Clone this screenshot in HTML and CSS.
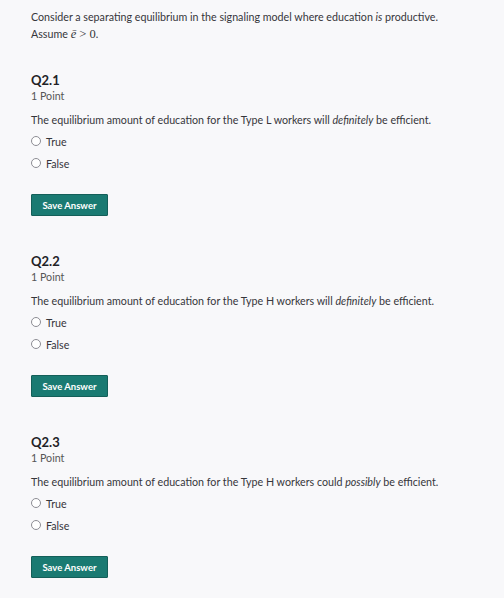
FILE: index.html
```html
<!DOCTYPE html>
<html>
<head>
<meta charset="utf-8">
<link rel="stylesheet" href="styles.css">
</head>
<body>
<div class="page">
  <div class="intro">
    <p>Consider a separating equilibrium in the signaling model where education <em>is</em> productive.</p>
    <p>Assume <span class="math"><span class="ebar">ē</span> &gt; 0</span>.</p>
  </div>

  <section class="q">
    <h2 class="qtitle">Q2.1</h2>
    <div class="points">1 Point</div>
    <p class="prompt">The equilibrium amount of education for the Type L workers will <em>definitely</em> be efficient.</p>
    <label class="opt"><span class="radio"></span>True</label>
    <label class="opt"><span class="radio"></span>False</label>
    <button class="save">Save Answer</button>
  </section>

  <section class="q">
    <h2 class="qtitle">Q2.2</h2>
    <div class="points">1 Point</div>
    <p class="prompt">The equilibrium amount of education for the Type H workers will <em>definitely</em> be efficient.</p>
    <label class="opt"><span class="radio"></span>True</label>
    <label class="opt"><span class="radio"></span>False</label>
    <button class="save">Save Answer</button>
  </section>

  <section class="q">
    <h2 class="qtitle">Q2.3</h2>
    <div class="points">1 Point</div>
    <p class="prompt">The equilibrium amount of education for the Type H workers could <em>possibly</em> be efficient.</p>
    <label class="opt"><span class="radio"></span>True</label>
    <label class="opt"><span class="radio"></span>False</label>
    <button class="save">Save Answer</button>
  </section>
</div>
</body>
</html>
```

FILE: styles.css
```css
html, body {
  margin: 0;
  padding: 0;
  background: #f8f8fa;
}
body {
  font-family: "Lato", "Liberation Sans", sans-serif;
  font-size: 10.7px;
  color: #36363b;
}
.page {
  padding: 8px 31px 0 31px;
}
.intro p {
  margin: 0;
  line-height: 17px;
}
.math {
  font-family: "Liberation Serif", serif;
  font-size: 12.5px;
}
.ebar {
  font-style: italic;
}
.q {
  padding-top: 29px;
  display: flex;
  flex-direction: column;
  align-items: flex-start;
}
.q + .q {
  padding-top: 37px;
}
.qtitle {
  margin: 0;
  font-size: 13px;
  font-weight: 700;
  line-height: 16px;
  color: #222226;
}
.points {
  line-height: 16px;
  color: #555;
  margin-top: 0;
}
.prompt {
  margin: 8px 0 0 0;
  line-height: 16px;
}
.opt {
  display: flex;
  align-items: center;
  gap: 5px;
  height: 16px;
  margin-top: 6px;
}
.prompt + .opt {
  margin-top: 5px;
}
.radio {
  width: 8px;
  height: 8px;
  border: 1.5px solid #8d8d94;
  border-radius: 50%;
  background: #fff;
}
.save {
  margin-top: 23px;
  background: #1a7a72;
  color: #fff;
  border: 1px solid #145f59;
  border-radius: 1px;
  font-family: "Lato", "Liberation Sans", sans-serif;
  font-weight: 700;
  font-size: 9.5px;
  width: 77px;
  height: 22px;
  padding: 0;
}
```
